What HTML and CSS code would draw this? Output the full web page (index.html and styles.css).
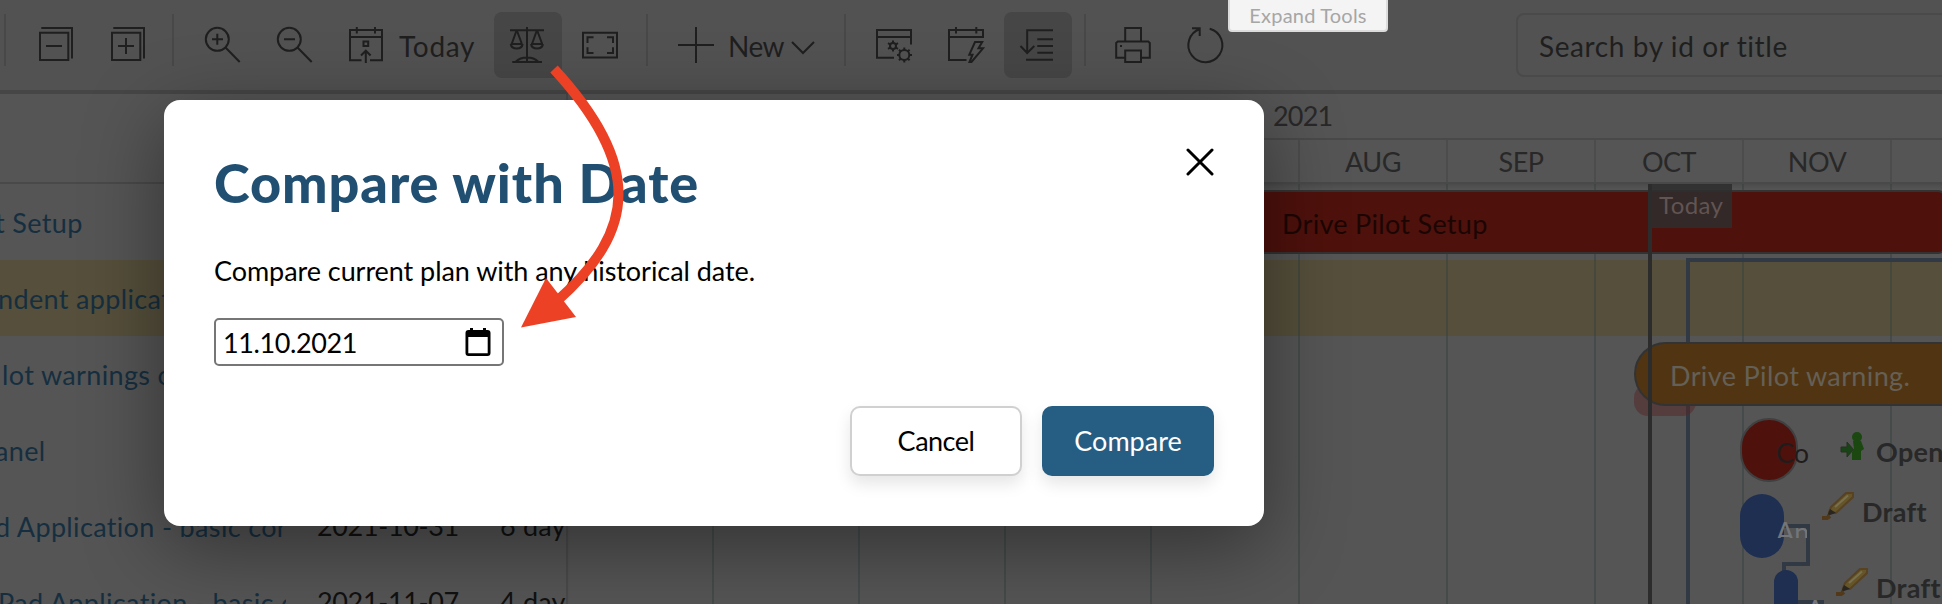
FILE: index.html
```
<!DOCTYPE html>
<html lang="en">
<head>
<meta charset="utf-8">
<title>Compare with Date</title>
<link rel="stylesheet" href="styles.css">
</head>
<body>
<div class="app">
  <header class="toolbar">
    <span class="sep sep-first"></span>
    <button class="tool"><svg class="icon" viewBox="0 0 36 36"><path d="M2 5.7H30.3V33H2ZM3.3 1H34V31.5M8 19H24"/></svg></button>
    <button class="tool"><svg class="icon" viewBox="0 0 36 36"><path d="M2 5.7H30.3V33H2ZM3.3 1H34V31.5M8 19H24M16 11V27"/></svg></button>
    <span class="sep"></span>
    <button class="tool"><svg class="icon" viewBox="0 0 36 36"><circle cx="13.3" cy="12.3" r="11.5"/><path d="M21.5 20.5L35.7 35M8 12.3H19M13.3 6.8V17.8"/></svg></button>
    <button class="tool"><svg class="icon" viewBox="0 0 36 36"><circle cx="13.3" cy="12.3" r="11.5"/><path d="M21.5 20.5L35.7 35M8 12.3H19"/></svg></button>
    <button class="tool tool-today"><svg class="icon" viewBox="0 0 36 36"><path d="M13.5 33.3H2V3H34V33.3H22M2 10H34M8.8 0V6.5M27 0V6.5M15.5 14.5H20.2V19H15.5ZM17.8 36V23.5M13 28.5L17.8 23.7L22.6 28.5"/></svg><span>Today</span></button>
    <button class="tool active"><svg class="icon" viewBox="0 0 36 36"><path d="M17 0V34M0 3.2H34M6.7 3L1.7 17M6.7 3L11.9 17M27 3L22 17M27 3L32.2 17M.7 17H12.7M21 17H33M.7 17C1.7 23 11.7 23 12.7 17M21 17C22 23 32 23 33 17M2.3 35H32M6 34.5C11 29 23 29 28 34.5"/></svg></button>
    <button class="tool"><svg class="icon" viewBox="0 0 36 36"><path d="M1 5.8H35V30.5H1ZM5.5 16V10.3H11.5M25 10.3H31V16M31 20.3V26H25M11.5 26H5.5V20.3"/></svg></button>
    <span class="sep sep-wide"></span>
    <button class="tool tool-new"><svg class="icon" viewBox="0 0 36 36"><path d="M18 0V36M0 18H36"/></svg><span>New</span><svg class="chevron" viewBox="0 0 24 14"><path d="M1 1L12 12L23 1"/></svg></button>
    <span class="sep sep-new"></span>
    <button class="tool"><svg class="icon" viewBox="0 0 36 36"><path d="M18 30.7H1V3H35V17.5M1 10H35"/><circle cx="17" cy="19" r="3"/><path d="M17 13.5V16M17 22V24.5M12 16.2L14.3 17.5M19.7 20.5L22 21.8M12 21.8L14.3 20.5M19.7 17.5L22 16.2"/><circle cx="28.3" cy="28" r="5"/><path d="M28.3 20.5V23M28.3 33V35.5M21 28H23.3M33.3 28H36M23 22.8L24.8 24.5M31.8 31.5L33.6 33.2M23 33.2L24.8 31.5M31.8 24.5L33.6 22.8"/></svg></button>
    <button class="tool"><svg class="icon" viewBox="0 0 36 36"><path d="M18.5 33H1V3H35V11M1 10H35M8 0V6.5M28.3 0V6.5M27 15H34.2L30.5 21.3H35L23.5 35H21.5L24.5 27.7H21.3Z"/></svg></button>
    <button class="tool active"><svg class="icon" viewBox="0 0 36 36"><path d="M33 3.2H7.2V26M.5 19L7.2 26L14.3 19M17.3 12.3H33M17.3 19H33M17.3 25.7H33M6 32.7H33"/></svg></button>
    <span class="sep sep-wide"></span>
    <button class="tool tool-tight"><svg class="icon" viewBox="0 0 36 36"><path d="M10.2 14.3V1H26V14.3M10.2 30.7H1.2V16L2.8 14.4H33.2L34.8 16V30.7H26M10.2 23.5H26V35H10.2ZM5 19H7"/></svg></button>
    <button class="tool"><svg class="icon" viewBox="0 0 36 36"><path d="M22.7 1.7A17 17 0 1 1 13 2M5 1.2H12.7V9"/></svg></button>
    <div class="search">Search by id or title</div>
  </header>

  <main class="plan">
    <section class="list">
      <div class="list-head"></div>
      <div class="row"><span class="name" style="margin-left:-5px">t Setup</span></div>
      <div class="row selected"><span class="name" style="margin-left:-2px">ndent applicati</span></div>
      <div class="row"><span class="name" style="margin-left:2px">lot warnings o</span></div>
      <div class="row"><span class="name" style="margin-left:-5px">anel</span></div>
      <div class="row"><span class="name name-cut" style="text-indent:-5px">d Application - basic cor</span><span class="date">2021-10-31</span><span class="days">6 days</span></div>
      <div class="row"><span class="name name-cut" style="text-indent:-2px">Pad Application - basic c</span><span class="date">2021-11-07</span><span class="days">4 days</span></div>
    </section>

    <section class="chart">
      <div class="year">2021</div>
      <div class="months"><span></span><span></span><span></span><span></span><span></span><span>AUG</span><span>SEP</span><span>OCT</span><span>NOV</span><span></span></div>
      <div class="canvas">
        <div class="lane"></div><div class="lane selected"></div><div class="lane"></div><div class="lane"></div><div class="lane"></div><div class="lane"></div>
        <div class="grid"><i></i><i></i><i></i><i></i><i></i><i></i><i></i><i></i><i></i><i></i></div>
        <svg class="links" viewBox="0 0 1374 420"><path d="M1374 76H1120V420M1216 342H1240V380H1216V390M1230 418H1256"/></svg>
        <div class="baseline"></div>
        <div class="bar setup">Drive Pilot Setup</div>
        <div class="bar warning">Drive Pilot warning.</div>
        <div class="bar control"></div><span class="bar-text co">Co</span>
        <div class="bar app-a"></div><span class="bar-text an">An</span>
        <div class="bar app-b"></div><span class="bar-text ap">A</span>
        <div class="today-line"></div><div class="today-label">Today</div>
        <div class="status status-open"><svg viewBox="0 0 24 28"><circle cx="17" cy="5" r="5"/><path d="M13 9H21L24 17L21 19V28H12V20L14 17Z"/><path class="go" d="M1 15H7V10L13.500 17.500L7 25V20H1Z"/></svg><b>Open</b></div>
        <div class="status status-draft"><svg viewBox="0 0 32 28"><path class="pen" d="M7 20L9 15L24 1L31 1V5L14 21Z"/><path class="shine" d="M13 15L26 3.500"/><path class="tip" d="M5 24L8 17L14 21Z"/><path class="mark" d="M0 26H5L8 24"/></svg><b>Draft</b></div>
        <div class="status status-draft2"><svg viewBox="0 0 32 28"><path class="pen" d="M7 20L9 15L24 1L31 1V5L14 21Z"/><path class="shine" d="M13 15L26 3.500"/><path class="tip" d="M5 24L8 17L14 21Z"/><path class="mark" d="M0 26H5L8 24"/></svg><b>Draft</b></div>
      </div>
    </section>
  </main>

  <div class="expand">Expand Tools</div>

  <section class="modal">
    <div class="modal-head">
      <h1>Compare with Date</h1>
      <svg class="close" viewBox="0 0 28 28"><path d="M2 2L26 26M26 2L2 26"/></svg>
    </div>
    <p>Compare current plan with any historical date.</p>
    <div class="date-field"><span>11.10.2021</span><svg viewBox="0 0 26 28"><path d="M3.500 2H5V0H8V2H18V0H21V2H22.500A3 3 0 0 1 25.500 5V25A3 3 0 0 1 22.500 28H3.500A3 3 0 0 1 .5 25V5A3 3 0 0 1 3.500 2ZM3.300 9V25.300H22.700V9Z"/></svg></div>
    <div class="actions"><button class="cancel">Cancel</button><button class="compare">Compare</button></div>
  </section>

  <svg class="arrow" viewBox="0 0 1942 604"><path class="arrow-line" d="M554 69C642 165 637 230 557 301"/><path class="arrow-head" d="M521 327.500L546 278L576 317Z"/></svg>
</div>
</body>
</html>
```
FILE: styles.css
```
* { box-sizing: border-box; }
body { margin: 0; background: #555; font: 27px/36px Lato, "Noto Sans", sans-serif; color: #1f1f1f; }
button { font: inherit; color: inherit; border: 0; background: none; padding: 0; }
.app { position: relative; width: 1942px; height: 604px; overflow: hidden; }

/* Toolbar */
.toolbar { display: flex; align-items: center; height: 94px; padding-bottom: 4px; background: #525252; border-bottom: 4px solid #464646; }
.sep { flex: none; width: 2px; height: 52px; margin: -6px 14px 0 6px; background: #484848; }
.sep-first { margin: -6px 16px 0 4px; }
.sep-wide { margin-left: 8px; }
.sep-new { margin-left: 6px; margin-right: 14px; }
.tool { flex: none; display: flex; align-items: center; width: 68px; height: 66px; padding: 0 16px; margin: 4px 4px 0 0; border-radius: 8px; }
.tool.active { background: #464646; }
.tool-today { width: 158px; gap: 15px; font-size: 28px; letter-spacing: .7px; }
.tool-new { width: 172px; gap: 14px; font-size: 28px; letter-spacing: -.5px; }
.tool-tight { margin-left: -1px; }
.tool span { margin-top: 2px; }
.icon { flex: none; width: 36px; height: 36px; overflow: visible; }
.icon, .chevron { fill: none; stroke: #1f1f1f; stroke-width: 2; }
.chevron { flex: none; width: 24px; height: 14px; margin: 5px 0 0 -7px; }
.search { flex: none; width: 440px; height: 64px; margin: 4px 0 0 273px; padding: 13px 20px 11px 21px; border: 2px solid #4a4a4a; border-radius: 8px; font-size: 28px; letter-spacing: .6px; }

/* Task list */
.plan { display: flex; height: 510px; }
.list { flex: none; width: 568px; border-right: 2px solid #4a4a4a; overflow: hidden; }
.list-head { height: 90px; border-bottom: 2px solid #494949; }
.row { display: flex; align-items: center; height: 76px; white-space: nowrap; color: #111; }
.selected { background: #554f3b; }
.name { padding-top: 1px; color: #162f40; letter-spacing: .35px; }
.name-cut { flex: none; width: 286px; overflow: hidden; }
.date { flex: none; width: 184px; padding-left: 31px; letter-spacing: -.35px; }
.days { flex: none; width: 96px; padding-left: 30px; letter-spacing: .2px; overflow: hidden; }

/* Chart */
.chart { flex: none; width: 1374px; }
.year { height: 46px; padding: 4px 0 0 705px; border-bottom: 2px solid #494949; color: #282828; letter-spacing: -.8px; }
.months, .grid { display: grid; grid-template-columns: 146px 146px 146px 146px 148px 148px 148px 148px 148px 50px; }
.months { height: 44px; border-bottom: 2px solid #494949; }
.months span { padding-top: 4px; border-right: 2px solid #4c4c4c; text-align: center; color: #282828; letter-spacing: -.5px; }
.months span:last-child, .grid i:last-child { border-right: 0; }
.canvas { position: relative; height: 420px; overflow: hidden; box-shadow: inset 0 4px 4px -2px #4a4a4a; }
.lane { height: 76px; }
.grid { position: absolute; inset: 0; }
.grid i { border-right: 2px solid rgba(45, 60, 60, .38); }
.links { position: absolute; inset: 0; width: 1374px; height: 420px; fill: none; stroke: #303944; stroke-width: 4; }
.bar { position: absolute; border: 2px solid #333; white-space: nowrap; }
.setup { left: -200px; top: 6px; width: 1578px; height: 64px; padding: 14px 0 0 912px; border-radius: 8px; background: #4f110c; color: #1c0604; letter-spacing: .3px; }
.warning { left: 1066px; top: 158px; width: 400px; height: 64px; padding: 14px 0 0 34px; border-radius: 32px; background: #513512; color: #656057; letter-spacing: .38px; }
.baseline { position: absolute; left: 1066px; top: 200px; width: 62px; height: 32px; border-radius: 14px; background: rgba(85, 40, 42, .55); }
.control { left: 1172px; top: 234px; width: 58px; height: 64px; border-radius: 29px; border-color: #404040; background: #4f110c; }
.app-a { left: 1172px; top: 310px; width: 44px; height: 64px; border: 0; border-radius: 22px; background: #1e2f52; }
.app-b { left: 1206px; top: 386px; width: 24px; height: 64px; border: 0; border-radius: 12px; background: #1e2f52; }
.bar-text { position: absolute; overflow: hidden; }
.co { left: 1208px; top: 251px; color: #211c1b; }
.an { left: 1208px; top: 330px; width: 31px; height: 24px; color: #737679; }
.ap { left: 1238px; top: 408px; color: #737679; }
.today-line { position: absolute; left: 1080px; top: 0; width: 4px; height: 420px; background: #2c2c2c; }
.today-label { position: absolute; left: 1084px; top: 0; width: 80px; height: 44px; padding: 3px 0 0 7px; background: rgba(45, 45, 45, .86); color: #625452; font-size: 24px; letter-spacing: .4px; }
.status { position: absolute; display: flex; align-items: flex-start; color: #282828; letter-spacing: .3px; }
.status svg { height: 28px; }
.status-open { left: 1272px; top: 248px; gap: 12px; }
.status-open svg { width: 24px; fill: #1b4810; }
.status-open .go { fill: #184417; stroke: #24351f; stroke-width: 1; }
.status-draft { left: 1254px; top: 308px; gap: 8px; }
.status-draft2 { left: 1268px; top: 384px; gap: 8px; }
.status-draft svg, .status-draft2 svg { width: 32px; }
.status b { margin-top: 2px; }
.pen { fill: #665528; stroke: #574222; stroke-width: 2; }
.shine { fill: none; stroke: #777050; stroke-width: 2; }
.tip { fill: #292621; }
.mark { fill: none; stroke: #51391a; stroke-width: 4; }

/* Overlays */
.expand { position: absolute; left: 1228px; top: -2px; width: 160px; height: 34px; border: 2px solid #dcdcdc; border-radius: 0 0 4px 4px; background: #f4f4f4; color: #a6a6a6; font-size: 20px; line-height: 30px; text-align: center; letter-spacing: .2px; }
.modal { position: absolute; left: 164px; top: 100px; width: 1100px; height: 426px; padding: 48px 50px 50px; border-radius: 16px; background: #fff; color: #000; box-shadow: 0 20px 80px rgba(0, 0, 0, .42); }
.modal-head { display: flex; justify-content: space-between; align-items: flex-start; height: 105px; }
h1 { margin: 0; font-size: 54px; line-height: 70px; font-weight: 900; color: #204f72; letter-spacing: .95px; }
.close { width: 28px; height: 28px; fill: none; stroke: #000; stroke-width: 3; stroke-linecap: round; }
p { margin: 0; letter-spacing: -.06px; }
.date-field { display: flex; align-items: center; justify-content: space-between; width: 290px; height: 48px; margin-top: 29px; padding: 1px 11px 0 7px; border: 2px solid #767676; border-radius: 5px; letter-spacing: -.4px; }
.date-field svg { width: 26px; height: 28px; margin-top: -2px; fill-rule: evenodd; }
.actions { display: flex; justify-content: flex-end; gap: 20px; margin-top: 40px; }
.actions button { width: 172px; height: 70px; border-radius: 10px; box-shadow: 0 8px 16px rgba(0, 0, 0, .1); }
.actions .cancel { border: 2px solid #d0d0d0; background: #fff; letter-spacing: -.5px; }
.actions .compare { background: #265e83; color: #fff; }
.arrow { position: absolute; inset: 0; width: 1942px; height: 604px; }
.arrow-line { fill: none; stroke: #ec4125; stroke-width: 10; }
.arrow-head { fill: #ec4125; }
```
